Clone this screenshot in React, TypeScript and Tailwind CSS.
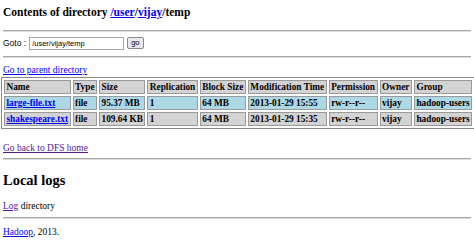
import React from 'react';

const rows = [
  { name: 'large-file.txt', type: 'file', size: '95.37 MB', rep: '1', block: '64 MB', mtime: '2013-01-29 15:55', perm: 'rw-r--r--', owner: 'vijay', group: 'hadoop-users', bg: 'bg-[#add8e6]' },
  { name: 'shakespeare.txt', type: 'file', size: '109.64 KB', rep: '1', block: '64 MB', mtime: '2013-01-29 15:35', perm: 'rw-r--r--', owner: 'vijay', group: 'hadoop-users', bg: 'bg-[#d3d3d3]' },
];

const headers = ['Name', 'Type', 'Size', 'Replication', 'Block Size', 'Modification Time', 'Permission', 'Owner', 'Group'];

const Rule = ({ className = '' }: { className?: string }) => (
  <div className={`h-[2px] border-t border-[#a8a8a8] bg-[#dcdcdc] ${className}`} />
);

export default function App() {
  const cell = 'h-[14px] border border-[#9a9a9a] px-[1.5px] py-0 text-left align-middle leading-[12px] whitespace-nowrap';

  return (
    <div className="w-[474px] h-[246px] overflow-hidden bg-white px-[3px] text-[9.5px] text-black font-['Liberation_Serif',serif]">
      <h3 className="pt-[6px] text-[11.5px] font-bold leading-[13px]">
        Contents of directory{' '}
        <a href="#" className="text-[#0000ee] underline">/user</a>/
        <a href="#" className="text-[#0000ee] underline">vijay</a>/temp
      </h3>

      <Rule className="mt-[11px]" />

      <div className="mt-[4px] flex h-[14px] items-center font-['Liberation_Sans',sans-serif] text-[8.5px]">
        <span className="mr-[3px]">Goto :</span>
        <input
          readOnly
          value="/user/vijay/temp"
          className="h-[13px] w-[95px] border border-[#a5a5a5] px-[2px] text-[7.5px] leading-[11px] outline-none"
        />
        <button className="ml-[3px] h-[12px] rounded-[2px] border border-[#8a8a8a] bg-[#e8e8ee] px-[3px] text-[7.5px] leading-[10px]">
          go
        </button>
      </div>

      <Rule className="mt-[6px]" />

      <div className="mt-[7px] leading-[11px]">
        <a href="#" className="text-[#0000ee] underline">Go to parent directory</a>
      </div>

      <table className="-ml-[2px] mt-[1px] border border-[#8a8a8a] border-separate border-spacing-[2px] text-[9.3px] font-bold">
        <thead>
          <tr className="bg-[#d3d3d3]">
            {headers.map((h) => (
              <th key={h} className={cell}>{h}</th>
            ))}
          </tr>
        </thead>
        <tbody>
          {rows.map((r) => (
            <tr key={r.name} className={r.bg}>
              <td className={cell}>
                <a href="#" className="text-[#0000ee] underline">{r.name}</a>
              </td>
              <td className={cell}>{r.type}</td>
              <td className={cell}>{r.size}</td>
              <td className={cell}>{r.rep}</td>
              <td className={cell}>{r.block}</td>
              <td className={cell}>{r.mtime}</td>
              <td className={cell}>{r.perm}</td>
              <td className={cell}>{r.owner}</td>
              <td className={cell}>{r.group}</td>
            </tr>
          ))}
        </tbody>
      </table>

      <div className="mt-[14px] leading-[11px]">
        <a href="#" className="text-[#551a8b] underline">Go back to DFS home</a>
      </div>

      <Rule className="mt-[4px]" />

      <h2 className="mt-[12px] text-[14.5px] font-bold leading-[17px]">Local logs</h2>

      <div className="mt-[12px] leading-[11px]">
        <a href="#" className="text-[#551a8b] underline">Log</a> directory
      </div>

      <Rule className="mt-[5px]" />

      <div className="mt-[8px] leading-[11px]">
        <a href="#" className="text-[#0000ee] underline">Hadoop</a>, 2013.
      </div>
    </div>
  );
}
